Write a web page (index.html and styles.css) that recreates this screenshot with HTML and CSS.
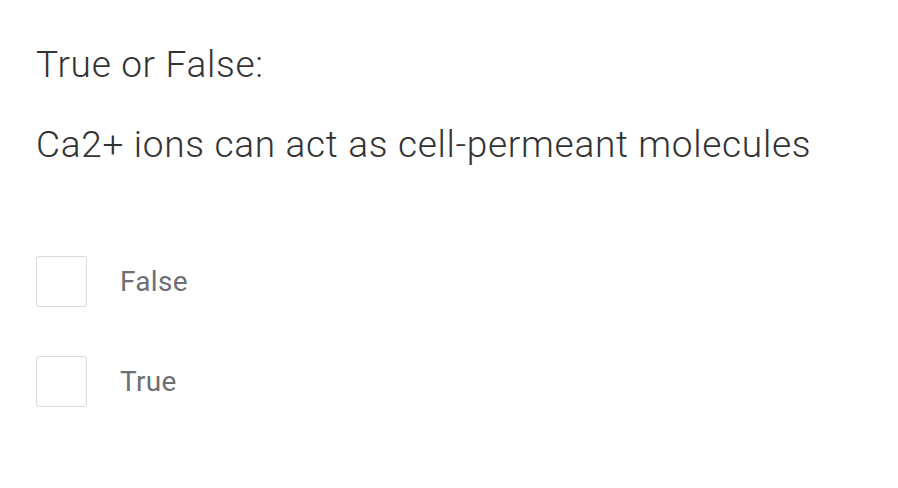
FILE: index.html
```html
<!DOCTYPE html>
<html lang="en">
<head>
    <meta charset="UTF-8">
    <title>Question</title>
    <link rel="stylesheet" href="styles.css">
</head>
<body>
    <div class="question">
        <p class="prompt">True or False:</p>
        <p class="prompt">Ca2+ ions can act as cell-permeant molecules</p>

        <!-- Answer choices -->
        <div class="choices">
            <label class="choice">
                <span class="box"></span>
                <span class="label">False</span>
            </label>
            <label class="choice">
                <span class="box"></span>
                <span class="label">True</span>
            </label>
        </div>
    </div>
</body>
</html>
```

FILE: styles.css
```css
body {
    margin: 0;
    background-color: #fff;
    font-family: Roboto, "Liberation Sans", sans-serif;
}

.question {
    padding: 44px 36px;
}

.prompt {
    margin: 0 0 38px;
    font-size: 37px;
    font-weight: 300;
    letter-spacing: 0.7px;
    line-height: 42px;
    color: #333;
}

.choices {
    display: flex;
    flex-direction: column;
    gap: 49px;
    margin-top: 90px;
}

.choice {
    display: flex;
    align-items: center;
    gap: 33px;
}

.box {
    width: 49px;
    height: 49px;
    border: 1px solid #d8d9db;
    border-radius: 3px;
}

.label {
    font-size: 28px;
    letter-spacing: 0.3px;
    color: #6e6f73;
}
```
